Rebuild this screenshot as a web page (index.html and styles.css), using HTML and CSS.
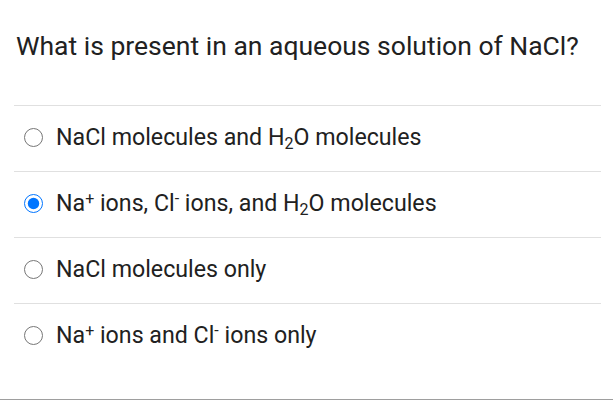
FILE: index.html
```html
<!DOCTYPE html>
<html>
<head>
<meta charset="utf-8">
<link rel="stylesheet" href="styles.css">
</head>
<body>
<div class="card">
  <div class="question">What is present in an aqueous solution of NaCl?</div>
  <ul class="options">
    <li class="option"><label><input type="radio" name="q"><span>NaCl molecules and H<sub>2</sub>O molecules</span></label></li>
    <li class="option"><label><input type="radio" name="q" checked><span>Na<sup>+</sup> ions, Cl<sup>-</sup> ions, and H<sub>2</sub>O molecules</span></label></li>
    <li class="option"><label><input type="radio" name="q"><span>NaCl molecules only</span></label></li>
    <li class="option"><label><input type="radio" name="q"><span>Na<sup>+</sup> ions and Cl<sup>-</sup> ions only</span></label></li>
  </ul>
</div>
</body>
</html>
```
FILE: styles.css
```css
html, body {
  margin: 0;
  padding: 0;
  background: #fff;
}
body {
  font-family: Roboto, "Liberation Sans", sans-serif;
  color: #212121;
}
.card {
  height: 399px;
  border-bottom: 1px solid #9e9e9e;
  box-sizing: content-box;
}
.question {
  font-size: 26.5px;
  line-height: 30px;
  padding: 31px 0 0 16px;
  height: 74px;
}
.options {
  list-style: none;
  margin: 0 12px 0 14px;
  padding: 0;
}
.option {
  border-top: 1px solid #e0e0e0;
  height: 65px;
  display: flex;
  align-items: center;
}
.option label {
  display: flex;
  align-items: center;
  gap: 13px;
  font-size: 23.2px;
  line-height: 28px;
  padding-left: 10px;
  margin-top: -3px;
}
.option input {
  width: 19px;
  height: 19px;
  margin: 0;
}
sup, sub {
  font-size: 16px;
  line-height: 0;
}
sup { vertical-align: 7px; }
sub { vertical-align: -4px; }
```
